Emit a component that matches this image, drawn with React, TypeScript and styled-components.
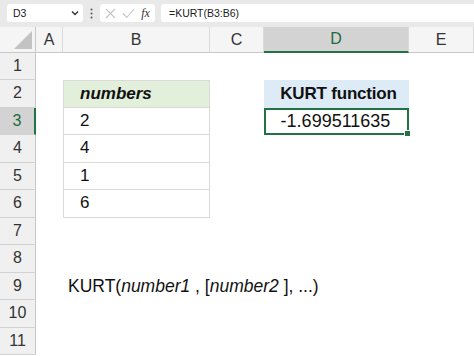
import styled, { createGlobalStyle, css } from "styled-components"

const GlobalStyle = createGlobalStyle`
    html, body {
        margin: 0;
        padding: 0;
        background: #ffffff;
    }
    body {
        font-family: "Liberation Sans", Arial, sans-serif;
        overflow: hidden;
    }
`

const Sheet = styled.div`
    width: 474px;
    height: 356px;
    display: flex;
    flex-direction: column;
    overflow: hidden;
`

const FormulaBar = styled.div`
    height: 27px;
    box-sizing: border-box;
    padding: 4px 0 5px 7px;
    background: #e9e9e9;
    display: flex;
    align-items: stretch;
`

const NameBox = styled.div`
    width: 76px;
    background: #fff;
    border-radius: 3px;
    display: flex;
    align-items: center;
    justify-content: space-between;
    padding: 0 4px 0 6px;
    box-sizing: border-box;
    font-size: 10.5px;
    color: #222;
`

const Dots = styled.div`
    width: 17px;
    display: flex;
    align-items: center;
    justify-content: center;
`

const ButtonBox = styled.div`
    width: 55px;
    background: #fff;
    border-radius: 3px;
    display: flex;
    align-items: center;
    justify-content: space-around;
    padding: 0 2px;
    box-sizing: border-box;
`

const Fx = styled.span`
    font-family: "Liberation Serif", "Times New Roman", serif;
    font-style: italic;
    font-size: 12px;
    color: #333;
`

const FormulaInput = styled.div`
    flex: 1;
    margin-left: 6px;
    background: #fff;
    border-radius: 3px 0 0 3px;
    display: flex;
    align-items: center;
    padding-left: 8px;
    font-size: 10.5px;
    color: #222;
`

const Grid = styled.div`
    display: grid;
    grid-template-columns: 36px 27px 147px 54px 145px 1fr;
    grid-template-rows: 26px 27px repeat(10, 27.5px);
`

const Corner = styled.div`
    background: #f5f5f5;
    border-right: 1px solid #c8c8c8;
    border-bottom: 1px solid #c8c8c8;
    display: flex;
    align-items: flex-end;
    justify-content: flex-end;
    padding: 0 3px 3px 0;
`

const ColHeader = styled.div<{ $active?: boolean }>`
    background: ${p => (p.$active ? "#d3d3d3" : "#f5f5f5")};
    color: ${p => (p.$active ? "#1e6b43" : "#333")};
    border-right: 1px solid #dadada;
    border-bottom: ${p => (p.$active ? "2px solid #217346" : "1px solid #c8c8c8")};
    display: flex;
    align-items: center;
    justify-content: center;
    font-size: 16px;
    box-sizing: border-box;
`

const RowHeader = styled.div<{ $active?: boolean }>`
    background: ${p => (p.$active ? "#d3d3d3" : "#f0f0f0")};
    color: ${p => (p.$active ? "#1e6b43" : "#333")};
    border-bottom: 1px solid #d2d2d2;
    border-right: ${p => (p.$active ? "2px solid #217346" : "1px solid #c8c8c8")};
    display: flex;
    align-items: center;
    justify-content: center;
    font-size: 16px;
    box-sizing: border-box;
`

type CellKind = "plain" | "tableHead" | "tableCell" | "kurtHead" | "selected"

const Cell = styled.div<{ $kind?: CellKind; $first?: boolean }>`
    position: relative;
    box-sizing: border-box;
    display: flex;
    align-items: center;
    font-size: 17px;
    color: #111;
    white-space: nowrap;

    ${p =>
        (p.$kind === "tableHead" || p.$kind === "tableCell") &&
        css`
            border-left: 1px solid #d9d9d9;
            border-right: 1px solid #d9d9d9;
            border-bottom: 1px solid #d9d9d9;
            padding-left: 16px;
        `}
    ${p =>
        p.$first &&
        css`
            border-top: 1px solid #d9d9d9;
        `}
    ${p =>
        p.$kind === "tableHead" &&
        css`
            background: #e2efda;
            font-weight: bold;
            font-style: italic;
        `}
    ${p =>
        p.$kind === "kurtHead" &&
        css`
            background: #ddebf7;
            font-weight: bold;
            justify-content: center;
            letter-spacing: -0.2px;
            padding-left: 4px;
        `}
    ${p =>
        p.$kind === "selected" &&
        css`
            border: 2px solid #217346;
            justify-content: center;
            font-size: 18px;
            padding-right: 2px;
        `}
`

const FillHandle = styled.span`
    position: absolute;
    right: -4px;
    bottom: -4px;
    width: 5px;
    height: 5px;
    background: #217346;
    border: 1px solid #fff;
`

const SyntaxCell = styled.div`
    grid-column: 3 / span 4;
    display: flex;
    align-items: center;
    padding-left: 5px;
    font-size: 17.5px;
    color: #111;
    white-space: pre;
`

const Arg = styled.i`
    font-style: italic;
`

const numbers = ["2", "4", "1", "6"]

function ChevronDown() {
    return (
        <svg width="8" height="6" viewBox="0 0 8 6">
            <path d="M1 1.5 L4 4.5 L7 1.5" fill="none" stroke="#333" strokeWidth="1.4" />
        </svg>
    )
}

function VDots() {
    return (
        <svg width="3" height="11" viewBox="0 0 3 11">
            <circle cx="1.5" cy="1.5" r="1" fill="#555" />
            <circle cx="1.5" cy="5.5" r="1" fill="#555" />
            <circle cx="1.5" cy="9.5" r="1" fill="#555" />
        </svg>
    )
}

function CrossIcon() {
    return (
        <svg width="11" height="11" viewBox="0 0 11 11">
            <path d="M1 1 L10 10 M10 1 L1 10" stroke="#c4c4c4" strokeWidth="1.1" fill="none" />
        </svg>
    )
}

function CheckIcon() {
    return (
        <svg width="13" height="11" viewBox="0 0 13 11">
            <path d="M1 5.5 L4.8 9.5 L12 1" stroke="#c4c4c4" strokeWidth="1.1" fill="none" />
        </svg>
    )
}

function CornerTriangle() {
    return (
        <svg width="18" height="18" viewBox="0 0 18 18">
            <polygon points="18,0 18,18 0,18" fill="#c3c3c3" />
        </svg>
    )
}

function Row({ n, children }: { n: number; children?: React.ReactNode }) {
    return (
        <>
            <RowHeader $active={n === 3}>{n}</RowHeader>
            {children}
        </>
    )
}

function EmptyRow({ n }: { n: number }) {
    return (
        <Row n={n}>
            <Cell /><Cell /><Cell /><Cell /><Cell />
        </Row>
    )
}

function App() {
    return (
        <>
            <GlobalStyle />
            <Sheet>
                <FormulaBar>
                    <NameBox>
                        <span>D3</span>
                        <ChevronDown />
                    </NameBox>
                    <Dots>
                        <VDots />
                    </Dots>
                    <ButtonBox>
                        <CrossIcon />
                        <CheckIcon />
                        <Fx>fx</Fx>
                    </ButtonBox>
                    <FormulaInput>=KURT(B3:B6)</FormulaInput>
                </FormulaBar>

                <Grid>
                    <Corner>
                        <CornerTriangle />
                    </Corner>
                    {["A", "B", "C", "D", "E"].map(c => (
                        <ColHeader key={c} $active={c === "D"}>
                            {c}
                        </ColHeader>
                    ))}

                    <EmptyRow n={1} />

                    <Row n={2}>
                        <Cell />
                        <Cell $kind="tableHead" $first>numbers</Cell>
                        <Cell />
                        <Cell $kind="kurtHead">KURT function</Cell>
                        <Cell />
                    </Row>

                    {numbers.map((v, i) => (
                        <Row key={v + i} n={i + 3}>
                            <Cell />
                            <Cell $kind="tableCell">{v}</Cell>
                            <Cell />
                            {i === 0 ? (
                                <Cell $kind="selected">
                                    -1.699511635
                                    <FillHandle />
                                </Cell>
                            ) : (
                                <Cell />
                            )}
                            <Cell />
                        </Row>
                    ))}

                    <EmptyRow n={7} />
                    <EmptyRow n={8} />
                    <Row n={9}>
                        <Cell />
                        <SyntaxCell>
                            {"KURT("}
                            <Arg>number1</Arg>
                            {" , ["}
                            <Arg>number2</Arg>
                            {" ], ...)"}
                        </SyntaxCell>
                    </Row>
                    <EmptyRow n={10} />
                    <EmptyRow n={11} />
                </Grid>
            </Sheet>
        </>
    )
}

export default App
